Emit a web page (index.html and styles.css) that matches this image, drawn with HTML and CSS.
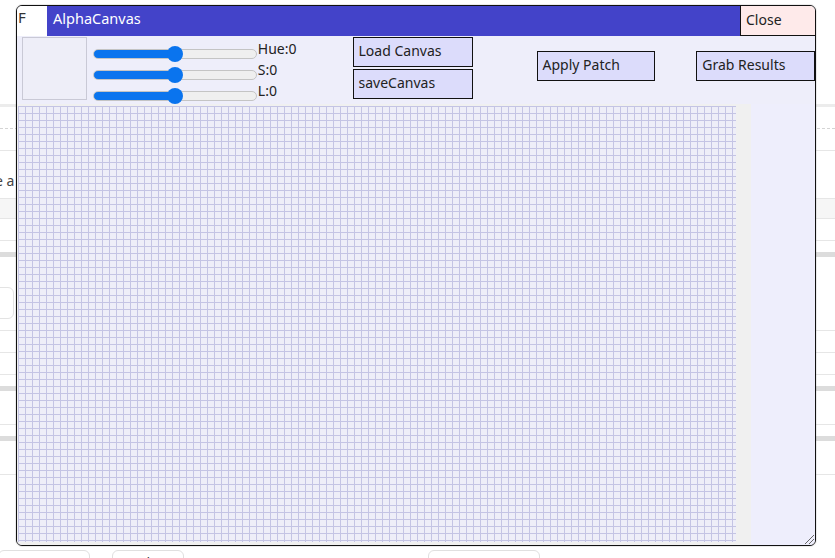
FILE: index.html
```html
<!DOCTYPE html>
<html lang="en">
<head>
    <meta charset="UTF-8">
    <title>AlphaCanvas</title>
    <link rel="stylesheet" href="styles.css">
</head>
<body>
    <div class="page">
        <div class="row row-top"></div>
        <div class="row dashed"></div>
        <div class="row"></div>
        <div class="row tall"><span class="frag">Use a</span></div>
        <div class="row band"></div>
        <div class="row"></div>
        <div class="row bar"></div>
        <div class="row"><div class="card"></div></div>
        <div class="row"><span class="frag">Ka</span></div>
        <div class="row"></div>
        <div class="row bar"></div>
        <div class="row"></div>
        <div class="row bar"></div>
        <div class="row"></div>
        <div class="pills">
            <span class="pill wide"></span>
            <span class="pill">Outdoor</span>
            <span class="pill long"></span>
        </div>
    </div>

    <div class="window">
        <div class="titlebar">
            <div class="tb-letter">F</div>
            <div class="tb-title">AlphaCanvas</div>
            <button class="btn close-btn">Close</button>
        </div>

        <div class="toolbar">
            <div class="swatch"></div>
            <div class="sliders">
                <div class="slider-row"><input type="range" min="0" max="360" value="180"><span>Hue:0</span></div>
                <div class="slider-row"><input type="range" min="0" max="100" value="50"><span>S:0</span></div>
                <div class="slider-row"><input type="range" min="0" max="100" value="50"><span>L:0</span></div>
            </div>
            <div class="btn-stack">
                <button class="btn">Load Canvas</button>
                <button class="btn">saveCanvas</button>
            </div>
            <button class="btn mid-btn patch-btn">Apply Patch</button>
            <button class="btn mid-btn grab-btn">Grab Results</button>
        </div>

        <div class="workspace">
            <div class="canvas-wrap">
                <div class="grid"></div>
            </div>
            <div class="side-panel"></div>
        </div>
        <div class="grip"></div>
    </div>
</body>
</html>
```

FILE: styles.css
```css
* {
    margin: 0;
    padding: 0;
    box-sizing: border-box;
}

body {
    width: 835px;
    height: 558px;
    overflow: hidden;
    background: #fff;
    font-family: 'Noto Sans', 'Liberation Sans', sans-serif;
    color: #222;
    position: relative;
}

/* page underneath the window */
.page {
    padding-top: 104px;
}

.row {
    height: 22px;
    border-bottom: 1px solid #e6e6e6;
    display: flex;
    align-items: center;
    font-size: 14px;
    color: #444;
}

.row-top {
    height: 0;
    border-bottom: 3px solid #ececec;
}

.dashed {
    border-bottom: 1px dashed #d4d4d4;
}

.tall {
    height: 48px;
    padding-top: 12px;
}

.frag {
    margin-left: -22px;
}

.band {
    height: 20px;
    background: #f6f6f6;
}

.bar {
    height: 16px;
    border-bottom: 5px solid #dcdcdc;
    margin-bottom: 12px;
}

.card {
    width: 40px;
    height: 32px;
    margin: 14px 0 8px -26px;
    border: 1px solid #e3e3e3;
    border-radius: 6px;
}

.row:has(.card) {
    height: 62px;
}

.pills {
    position: absolute;
    top: 550px;
    left: 0;
    display: flex;
}

.pill {
    display: inline-block;
    height: 24px;
    border: 1px solid #e0e0e0;
    border-radius: 6px;
    font-size: 13px;
    padding: 2px 6px;
    color: #333;
}

.pill.wide {
    width: 92px;
    margin-left: -2px;
}

.pill:nth-child(2) {
    width: 72px;
    margin-left: 22px;
}

.pill.long {
    width: 112px;
    margin-left: 244px;
}

/* window */
.window {
    position: absolute;
    left: 16px;
    top: 5px;
    width: 800px;
    height: 541px;
    border: 1px solid #111;
    border-radius: 6px;
    background: #eeeefa;
    overflow: hidden;
    display: flex;
    flex-direction: column;
    box-shadow: 0 0 0 1px rgba(0, 0, 0, 0.08);
}

.titlebar {
    display: flex;
    height: 30px;
    flex-shrink: 0;
}

.tb-letter {
    width: 30px;
    background: #fff;
    font-size: 15px;
    padding: 1px 0 0 1px;
    color: #333;
}

.tb-title {
    flex: 1;
    background: #4343c9;
    color: #fff;
    font-size: 14.5px;
    padding: 2px 0 0 6px;
}

.btn {
    font-family: inherit;
    font-size: 14px;
    color: #222;
    background: #dcdcfb;
    border: 1px solid #111;
    text-align: left;
    padding: 0 5px 3px;
    height: 30px;
    width: 119px;
}

.close-btn {
    width: 75px;
    height: 30px;
    background: #feeaea;
    border-top: none;
    border-right: none;
}

.toolbar {
    display: flex;
    height: 68px;
    flex-shrink: 0;
    padding: 0 0 0 5px;
}

.swatch {
    width: 65px;
    height: 63px;
    margin-top: 1px;
    border: 1px solid #c9c9d6;
    background: #eeeef8;
}

.sliders {
    display: flex;
    flex-direction: column;
    margin-left: 6px;
    padding-top: 4px;
}

.slider-row {
    display: flex;
    align-items: flex-start;
    height: 21px;
    font-size: 14px;
}

.slider-row input {
    width: 164px;
    height: 10px;
    margin-top: 9px;
    appearance: none;
    -webkit-appearance: none;
    background: linear-gradient(to right, #0a74ee 50%, #efefef 50%);
    border: 1px solid #c4c4c4;
    border-radius: 6px;
}

.slider-row input::-webkit-slider-thumb {
    -webkit-appearance: none;
    width: 16px;
    height: 16px;
    border-radius: 50%;
    background: #0a74ee;
}

.slider-row span {
    margin-left: 1px;
    line-height: 18px;
}

.btn-stack {
    display: flex;
    flex-direction: column;
    gap: 2px;
    margin-left: 56px;
    margin-top: 1px;
}

.btn-stack .btn {
    width: 120px;
}

.mid-btn {
    margin-top: 15px;
}

.patch-btn {
    margin-left: 64px;
}

.grab-btn {
    margin-left: 41px;
}

.workspace {
    flex: 1;
    display: flex;
}

.canvas-wrap {
    width: 734px;
    background: #f0f0f0;
    padding: 2px 0 0 1px;
}

.grid {
    width: 718px;
    height: 436px;
    background-color: #eeeef8;
    background-image:
        linear-gradient(to right, #c4c4e4 1px, transparent 1px),
        linear-gradient(to bottom, #c4c4e4 1px, transparent 1px);
    background-size: 7px 7px;
}

.side-panel {
    flex: 1;
    background: #eeeefc;
}

.grip {
    position: absolute;
    right: 1px;
    bottom: 1px;
    width: 9px;
    height: 9px;
    background: linear-gradient(135deg, transparent 45%, #666 45%, #666 52%, transparent 52%, transparent 70%, #666 70%, #666 77%, transparent 77%);
}
```
